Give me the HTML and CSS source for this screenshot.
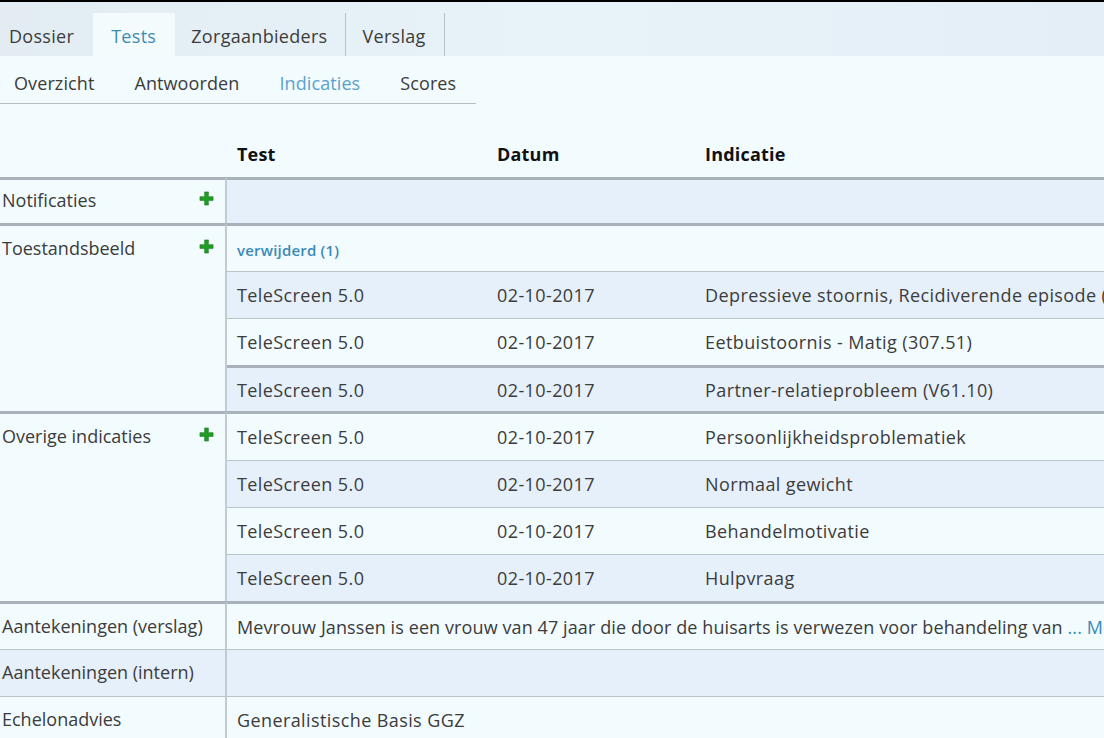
FILE: index.html
```html
<!DOCTYPE html>
<html lang="nl">
<head>
<meta charset="utf-8">
<title>Indicaties</title>
<link rel="stylesheet" href="styles.css">
</head>
<body>
<div class="page">
  <nav class="tabs">
    <div class="tab first">Dossier</div>
    <div class="tab active">Tests</div>
    <div class="tab sep">Zorgaanbieders</div>
    <div class="tab sep">Verslag</div>
  </nav>
  <nav class="subtabs">
    <div class="subtab">Overzicht</div>
    <div class="subtab">Antwoorden</div>
    <div class="subtab active">Indicaties</div>
    <div class="subtab">Scores</div>
  </nav>

  <table class="grid">
    <colgroup>
      <col class="c-label">
      <col class="c-test">
      <col class="c-date">
      <col class="c-ind">
    </colgroup>
    <thead>
      <tr><th class="h-label"></th><th>Test</th><th>Datum</th><th>Indicatie</th></tr>
    </thead>
    <tbody>
      <tr class="grp blue short">
        <td class="lbl"><div class="lblin"><span>Notificaties</span><svg class="plus" viewBox="0 0 16 16"><path d="M6 1h4v5h5v4h-5v5H6v-5H1V6h5z"/></svg></div></td>
        <td colspan="3"></td>
      </tr>
      <tr class="grp light mid">
        <td class="lbl" rowspan="4"><div class="lblin"><span>Toestandsbeeld</span><svg class="plus" viewBox="0 0 16 16"><path d="M6 1h4v5h5v4h-5v5H6v-5H1V6h5z"/></svg></div></td>
        <td colspan="3"><span class="link small">verwijderd (1)</span></td>
      </tr>
      <tr class="blue">
        <td>TeleScreen 5.0</td><td>02-10-2017</td><td class="nowrap">Depressieve stoornis, Recidiverende episode (296.32)</td>
      </tr>
      <tr class="light">
        <td>TeleScreen 5.0</td><td>02-10-2017</td><td>Eetbuistoornis - Matig (307.51)</td>
      </tr>
      <tr class="blue thick short">
        <td>TeleScreen 5.0</td><td>02-10-2017</td><td>Partner-relatieprobleem (V61.10)</td>
      </tr>
      <tr class="grp light">
        <td class="lbl" rowspan="4"><div class="lblin"><span>Overige indicaties</span><svg class="plus" viewBox="0 0 16 16"><path d="M6 1h4v5h5v4h-5v5H6v-5H1V6h5z"/></svg></div></td>
        <td>TeleScreen 5.0</td><td>02-10-2017</td><td>Persoonlijkheidsproblematiek</td>
      </tr>
      <tr class="blue">
        <td>TeleScreen 5.0</td><td>02-10-2017</td><td>Normaal gewicht</td>
      </tr>
      <tr class="light">
        <td>TeleScreen 5.0</td><td>02-10-2017</td><td>Behandelmotivatie</td>
      </tr>
      <tr class="blue">
        <td>TeleScreen 5.0</td><td>02-10-2017</td><td>Hulpvraag</td>
      </tr>
      <tr class="grp light mid">
        <td class="lbl"><div class="lblin"><span>Aantekeningen (verslag)</span></div></td>
        <td colspan="3" class="nowrap note">Mevrouw Janssen is een vrouw van 47 jaar die door de huisarts is verwezen voor behandeling van <span class="link">... Meer</span></td>
      </tr>
      <tr class="blue full">
        <td class="lbl"><div class="lblin"><span>Aantekeningen (intern)</span></div></td>
        <td colspan="3"></td>
      </tr>
      <tr class="light">
        <td class="lbl"><div class="lblin"><span>Echelonadvies</span></div></td>
        <td colspan="3">Generalistische Basis GGZ</td>
      </tr>
    </tbody>
  </table>
</div>
</body>
</html>
```
FILE: styles.css
```css
html, body {
  margin: 0;
  padding: 0;
}
body {
  background: #f2fbfe;
  font-family: "Open Sans", "DejaVu Sans", sans-serif;
  color: #3c3c3c;
  overflow: hidden;
  width: 1104px;
  height: 738px;
}
.page {
  border-top: 2px solid #000;
  width: 1104px;
  overflow: hidden;
}

/* main tabs */
.tabs {
  display: flex;
  align-items: flex-end;
  height: 54px;
  background: linear-gradient(90deg, #e3ecf3 0%, #e7f3f9 50%, #e4eef6 100%);
}
.tab {
  height: 43px;
  box-sizing: border-box;
  padding: 3px 18px 0 17px;
  display: flex;
  align-items: center;
  font-size: 18px;
  letter-spacing: 0.3px;
  color: #3c3c3c;
}
.tab.first {
  padding-left: 9px;
  padding-right: 19px;
}
.tab.active {
  background: #f3fbfd;
  color: #3a8db3;
  padding-left: 18px;
  padding-right: 19px;
}
.tab.sep {
  border-right: 1px solid #b9c1c8;
  padding-left: 16px;
  padding-right: 18px;
}

/* sub tabs */
.subtabs {
  display: flex;
  align-items: center;
  gap: 40px;
  width: 476px;
  height: 48px;
  box-sizing: border-box;
  padding: 6px 20px 0 14px;
  border-bottom: 1px solid #b5bdc5;
}
.subtab {
  font-size: 18px;
  letter-spacing: 0.1px;
  color: #3c3c3c;
}
.subtab.active {
  color: #5aa2cc;
}

/* grid */
.grid {
  margin-top: 26px;
  border-collapse: separate;
  border-spacing: 0;
  table-layout: fixed;
  width: 1260px;
  font-size: 18px;
  letter-spacing: 0.4px;
}
.c-label { width: 227px; }
.c-test { width: 260px; }
.c-date { width: 208px; }
.c-ind { width: 565px; }

.grid th {
  height: 47px;
  padding: 0 10px;
  text-align: left;
  font-weight: 700;
  color: #111;
  letter-spacing: 0.2px;
  vertical-align: middle;
}
.grid td {
  height: 46px;
  padding: 0 10px;
  border-top: 1px solid #bac3cb;
  vertical-align: middle;
  white-space: nowrap;
  overflow: hidden;
}
.grid tr.grp td,
.grid tr.thick td {
  border-top: 3px solid #a9b2bb;
}
.grid tr.short td { height: 43px; }
.grid tr.mid td { height: 45px; }

.grid tr.blue td { background: #e6f0fa; }
.grid tr.light td { background: #f2fbfe; }

.grid tr td.lbl {
  background: #f2fbfe;
  border-right: 2px solid #c3cbd2;
  padding: 0 11px 0 2px;
  vertical-align: top;
  letter-spacing: 0;
}
.grid tr.full td.lbl { background: #e6f0fa; }
.grid tr.short td.lbl { vertical-align: top; }

.lblin {
  height: 44px;
  display: flex;
  align-items: center;
  justify-content: space-between;
  color: #3c3c3c;
}
.grid tr.short .lblin { height: 40px; }
.grid td.note { letter-spacing: 0.1px; }
.plus {
  width: 15px;
  height: 15px;
  margin-top: -3px;
  fill: #1f9d24;
  stroke: #137517;
  stroke-width: 0.6;
}
.link {
  color: #3d8ab8;
}
.small {
  font-size: 15px;
  font-weight: 600;
  letter-spacing: 0.2px;
}
.nowrap { white-space: nowrap; }
```
